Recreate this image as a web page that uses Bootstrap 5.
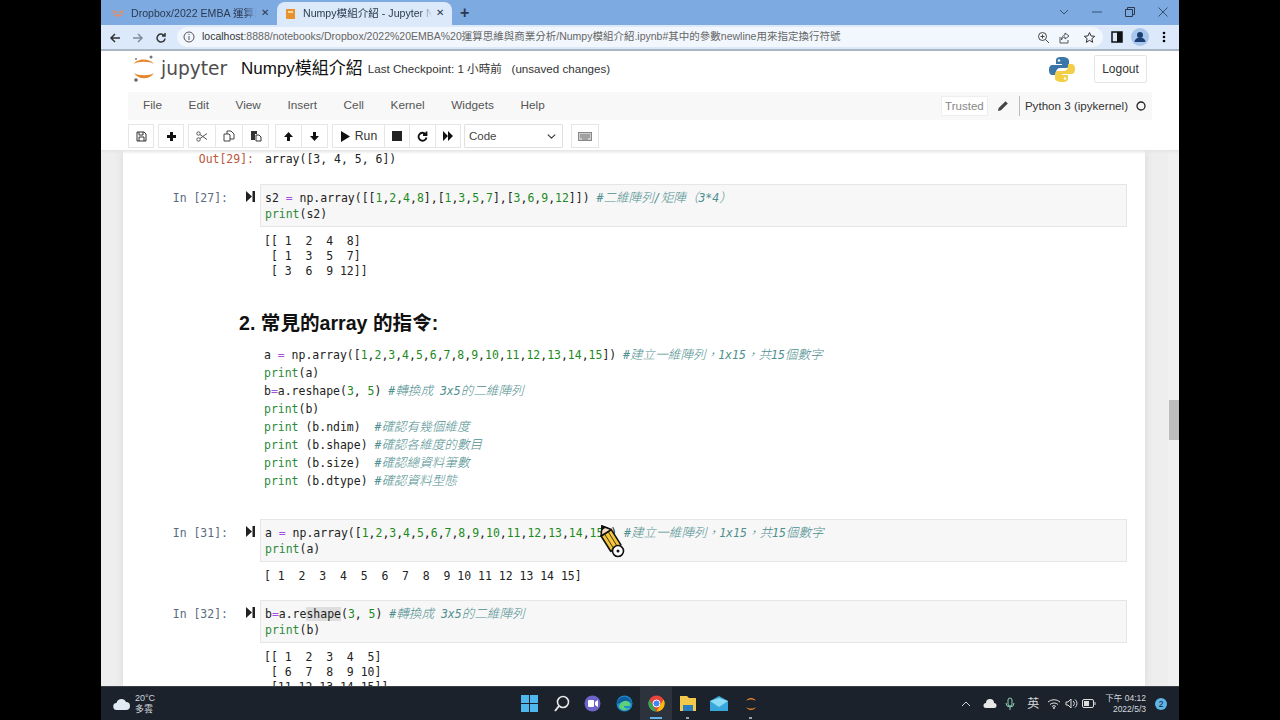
<!DOCTYPE html>
<html lang="zh-Hant">
<head>
  <meta charset="UTF-8">
  <title>Numpy模組介紹 - Jupyter Notebook</title>
  <link href="https://cdn.jsdelivr.net/npm/bootstrap@5.3.3/dist/css/bootstrap.min.css" rel="stylesheet">
  <style>
    html, body { height: 100%; margin: 0; overflow: hidden; background: #000; }
    body { font-family: "Liberation Sans", "Noto Sans CJK TC", sans-serif; color: #222; }
    .screen { width: 1078px; height: 720px; margin-left: 101px; background: #fff; position: relative; overflow: hidden; }

    /* browser chrome */
    .tabstrip { height: 25px; background: #7eaae2; color: #2b3a4f; font-size: 10.6px; }
    .tab-item { width: 176px; height: 23px; padding: 0 8px 0 11px; }
    .tab-on { width: 175px; background: #dbe9fb; border-radius: 8px 8px 0 0; height: 23px; padding: 0 8px 0 8px; }
    .tab-text { white-space: nowrap; overflow: hidden; flex: 1; margin-left: 3px; -webkit-mask-image: linear-gradient(90deg, #000 90%, transparent); mask-image: linear-gradient(90deg, #000 90%, transparent); }
    .tab-x { font-size: 9.5px; }
    .win-ctl { width: 132px; }
    .win-ctl span { width: 33px; text-align: center; line-height: 12px; }
    .addrbar { height: 26px; background: #dbe9fb; border-bottom: 2px solid #a9b6c6; padding: 0 7px 0 2px; }
    .addr-field { width: 926px; height: 20px; background: #f2f7fd; border-radius: 10px; font-size: 10.5px; color: #666; padding: 0 7px 0 6px; margin-left: 5px; }
    .addr-field b { font-weight: 400; color: #333; }
    .info-ic { margin-right: 7px; }
    .nav-ic { width: 23px; text-align: center; }
    .dots-ic { margin-left: 13px; }

    /* jupyter header */
    .jp-head { height: 40px; padding: 0 32px 4px 31px; }
    .jp-word { font-family: "DejaVu Sans", sans-serif; font-size: 18.6px; color: #4e4e4e; margin-left: 5px; width: 65px; }
    .jp-name { font-size: 17px; color: #111; margin: 0 5px 0 15px; }
    .jp-ck { font-size: 11.6px; color: #333; white-space: pre; }
    .jp-logout { font-size: 12px; height: 28px; width: 53px; border: 1px solid #e4e4e4; background: #fff; color: #333; margin-left: 19px; padding: 0; border-radius: 2px; }
    .jp-menu { height: 28px; margin: 1px 27px 0 27px; background: #f8f8f8; font-size: 11.8px; color: #555; padding: 0 6px 0 15px; column-gap: 26.6px; }
    .jp-right { column-gap: 0; }
    .jp-trust { font-size: 11.5px; color: #888; background: #fff; border: 1px solid #eee; height: 20px; width: 47px; line-height: 18px; text-align: center; }
    .pencil-ic { margin-left: 9px; }
    .jp-kernel { border-left: 1px solid #bbb; height: 20px; line-height: 20px; padding-left: 5px; margin-left: 10px; color: #333; font-size: 11.6px; }
    .jp-tools { height: 30px; margin: 0 27px; padding: 4px 0 0 1px; gap: 5px; }
    .tool-group { height: 24px; }
    .tool-up { margin-left: 2px; }
    .tool-btn { height: 24px; width: 26px; border: 1px solid #e6e6e6; background: #fff; margin-left: -1px; padding: 0; color: #222; font-size: 12.2px; display: flex; align-items: center; justify-content: center; border-radius: 0; }
    .tool-w27 { width: 27px; }
    .tool-w28 { width: 28px; }
    .tool-run { width: 53px; gap: 5px; color: #333; }
    .tool-code { width: 99px; height: 24px; font-size: 11.5px; color: #444; border: 1px solid #e0e0e0; border-radius: 1px; padding: 2px 4px 0; margin-left: -2px; background-position: right 5px center; background-size: 11px 9px; }
    .tool-kbd { margin-left: 4px; }

    /* notebook */
    .nb-area { height: 536px; background: #eee; overflow: hidden; position: relative; }
    .nb-area::before { content: ""; position: absolute; left: 0; right: 0; top: 0; height: 4px; background: linear-gradient(#e4e4e4, transparent); z-index: 2; }
    .nb-sheet { margin: 0 34px 0 22px; padding-top: 1px; background: #fff; box-shadow: 0 0 8px #d8d8d8; height: 100%; }
    .code { font-family: "DejaVu Sans Mono", "Noto Sans CJK TC", monospace; font-size: 11.48px; white-space: pre; color: #222; margin: 0; }
    .cmt { font-style: italic; color: #4f8f8f; }
    .cjk { font-family: "Noto Sans CJK TC", sans-serif; font-size: 12.6px; font-weight: 300; line-height: 1; }
    .kw { color: #2c8a3c; }
    .num { color: #1c8a1c; }
    .op { color: #a44fe0; }
    .cell-row { display: flex; }
    .cell-lab { width: 73px; text-align: right; color: #5a6a80; line-height: 16px; flex: none; margin-left: 32px; padding-top: 6px; }
    .cell-lab.out-lab { color: #b8563a; width: 99px; padding-top: 0; }
    .out-val { margin-left: 11px; line-height: 16px; }
    .runmark { width: 32px; flex: none; padding-left: 18px; padding-top: 7px; line-height: 0; }
    .cell-in { width: 867px; height: 43px; background: #f7f7f7; border: 1px solid #e6e6e6; padding: 5px 4px; line-height: 16px; flex: none; }
    .cell-out { margin: 7px 0 0 141px; line-height: 15px; }
    .md-h { font-size: 19.6px; font-weight: 700; color: #111; margin: 33px 0 0 116px; line-height: 22px; }
    .md-code { margin: 12px 0 0 141px; line-height: 18px; }
    .gap-a { margin-top: 17px; }
    .gap-b { margin-top: 29px; }
    .gap-c { margin-top: 16px; }
    .sel-word { background: #dedede; }
    .scroll-track { position: absolute; right: 0; top: 0; bottom: 0; width: 11px; background: #f1f1f1; }
    .scroll-thumb { position: absolute; left: 1px; right: 0; top: 250px; height: 40px; background: #bdbdbd; }
    .pen-cursor { position: absolute; left: 499px; top: 375px; z-index: 3; }

    /* windows taskbar */
    .taskbar { height: 34px; background: #1b222c; color: #d5d8dc; border-top: 1px solid #3a3f46; position: relative; padding-left: 12px; }
    .wx-text { line-height: 11px; margin-left: 5px; font-size: 9px; }
    .dock { position: absolute; left: 413px; top: 0; height: 33px; }
    .dock-it { width: 31.6px; height: 33px; display: flex; align-items: center; justify-content: center; position: relative; }
    .dock-it.on-app { background: #2c333d; }
    .dock-it.on-app::after { content: ""; position: absolute; bottom: 1px; left: 10px; width: 12px; height: 2px; background: #5fb4e8; }
    .dock-it.open-app::after { content: ""; position: absolute; bottom: 1px; left: 14px; width: 3px; height: 2px; background: #9aa0a6; }
    .tray { position: absolute; right: 12px; top: 0; height: 33px; }
    .tray-ime { font-size: 12px; }
    .tray-clock { text-align: right; line-height: 11px; font-size: 8.5px; margin: 0 9px 0 9px; }
    .tray-badge { width: 12px; height: 12px; border-radius: 50%; background: #5fb4e8; color: #10202e; font-size: 8.5px; text-align: center; line-height: 12px; }
  </style>
</head>
<body>
<div class="screen">
  <!-- tabs -->
  <div class="tabstrip d-flex align-items-end">
    <div class="tab-item d-flex align-items-center gap-1">
      <svg width="12" height="12" viewBox="0 0 12 12"><path d="M1 2l5 2-5 2zM11 2L6 4l5 2zM1 7l5 2 5-2-5-1z" fill="#e09070"/></svg>
      <span class="tab-text">Dropbox/2022 EMBA 運算思維與</span>
      <span class="tab-x">✕</span>
    </div>
    <div class="tab-on d-flex align-items-center gap-1">
      <svg width="11" height="12" viewBox="0 0 11 12"><path d="M1 1h9v10H2a1 1 0 0 1-1-1z" fill="#e8912d"/><path d="M3 3h5v2H3z" fill="#f9d7a5"/></svg>
      <span class="tab-text">Numpy模組介紹 - Jupyter Notebook</span>
      <span class="tab-x">✕</span>
    </div>
    <div class="ms-2 mb-1 fs-6 fw-bold lh-1">+</div>
    <div class="win-ctl d-flex ms-auto mb-2">
      <span><svg width="10" height="6" viewBox="0 0 10 6"><path d="M1 1l4 4 4-4" fill="none" stroke="#34506f"/></svg></span>
      <span><svg width="10" height="2" viewBox="0 0 10 2"><path d="M0 1h10" stroke="#34506f"/></svg></span>
      <span><svg width="10" height="10" viewBox="0 0 10 10"><path d="M.5 2.500h7v7h-7zM2.500 2.500v-2h7v7h-2" fill="none" stroke="#2b3a4f"/></svg></span>
      <span><svg width="10" height="10" viewBox="0 0 10 10"><path d="M.5.5l9 9M9.500.5l-9 9" stroke="#34506f"/></svg></span>
    </div>
  </div>
  <div class="addrbar d-flex align-items-center">
    <span class="nav-ic"><svg width="12" height="12" viewBox="0 0 12 12"><path d="M11 6H2M6 2L2 6l4 4" fill="none" stroke="#333" stroke-width="1.5"/></svg></span>
    <span class="nav-ic"><svg width="12" height="12" viewBox="0 0 12 12"><path d="M1 6h9M6 2l4 4-4 4" fill="none" stroke="#7d8b9c" stroke-width="1.5"/></svg></span>
    <span class="nav-ic"><svg width="12" height="12" viewBox="0 0 12 12"><path d="M10 6.500A4 4 0 1 1 9 3.400M10 1v3H7" fill="none" stroke="#333" stroke-width="1.5"/></svg></span>
    <div class="addr-field d-flex align-items-center">
      <svg class="info-ic" width="12" height="12" viewBox="0 0 12 12"><circle cx="6" cy="6" r="5" fill="none" stroke="#555"/><path d="M6 5v4M6 3v1" stroke="#555"/></svg>
      <span class="flex-grow-1"><b>localhost</b>:8888/notebooks/Dropbox/2022%20EMBA%20運算思維與商業分析/Numpy模組介紹.ipynb#其中的參數newline用來指定換行符號</span>
      <svg class="me-1" width="13" height="13" viewBox="0 0 13 13"><circle cx="5.500" cy="5.500" r="4" fill="none" stroke="#444"/><path d="M8.500 8.500l3.500 3.500M3.500 5.500h4M5.500 3.500v4" stroke="#444"/></svg>
      <svg class="mx-1" width="13" height="13" viewBox="0 0 13 13"><path d="M2 6v6h8V9M7 2l4 3-4 3V6C5 6 4 7 3.500 9 3.500 6 5 4 7 4z" fill="none" stroke="#555"/></svg>
      <svg class="ms-2" width="13" height="13" viewBox="0 0 13 13"><path d="M6.500 1.500l1.500 3.400 3.700.4-2.800 2.400.8 3.600-3.200-1.900-3.200 1.900.8-3.600L1.300 5.300l3.700-.4z" fill="none" stroke="#333"/></svg>
    </div>
    <svg class="ms-2" width="12" height="12" viewBox="0 0 12 12"><rect x="1" y="1" width="10" height="10" fill="none" stroke="#111" stroke-width="1.500"/><rect x="6" y="1" width="5" height="10" fill="#111"/></svg>
    <svg class="ms-2" width="18" height="18" viewBox="0 0 18 18"><circle cx="9" cy="9" r="9" fill="#a9c7ec"/><circle cx="9" cy="7" r="3" fill="#1c3f74"/><path d="M3.500 14a5.500 4.500 0 0 1 11 0z" fill="#1c3f74"/></svg>
    <svg class="dots-ic" width="4" height="12" viewBox="0 0 4 12"><circle cx="2" cy="2" r="1.300"/><circle cx="2" cy="6" r="1.300"/><circle cx="2" cy="10" r="1.300"/></svg>
  </div>

  <!-- jupyter header -->
  <div class="jp-head d-flex align-items-center">
    <svg width="24" height="30" viewBox="0 0 24 30">
      <path d="M2 10C5 4 18 4 22 10 18 7 6 7 2 10zM2 19c4 7 16 7 20 0-4 3-16 3-20 0z" fill="#e8862e"/>
      <circle cx="19" cy="3" r="1.500" fill="#777"/><circle cx="4" cy="5" r="1" fill="#777"/><circle cx="4" cy="26" r="1.800" fill="#666"/>
    </svg>
    <span class="jp-word">jupyter</span>
    <span class="jp-name">Numpy模組介紹</span>
    <span class="jp-ck">Last Checkpoint: 1 小時前   (unsaved changes)</span>
    <svg class="ms-auto" width="26" height="27" viewBox="0 0 26 27">
      <path d="M13 1C7 1 7 3 7 5v3h6v1H4C1 9 0 11 0 14s1 5 4 5h3v-3c0-2 2-4 4-4h6c2 0 3-1 3-3V5c0-2-2-4-7-4z" fill="#3a76a8"/>
      <path d="M13 26c6 0 6-2 6-4v-3h-6v-1h9c3 0 4-2 4-5s-1-5-4-5h-3v3c0 2-2 4-4 4H9c-2 0-3 1-3 3v4c0 2 2 4 7 4z" fill="#f2cf47"/>
      <circle cx="10" cy="4.500" r="1.200" fill="#fff"/><circle cx="16" cy="22.500" r="1.200" fill="#fff"/>
    </svg>
    <button class="jp-logout" type="button">Logout</button>
  </div>
  <div class="jp-menu d-flex align-items-center">
    <span>File</span>
    <span>Edit</span>
    <span>View</span>
    <span>Insert</span>
    <span>Cell</span>
    <span>Kernel</span>
    <span>Widgets</span>
    <span>Help</span>
    <div class="jp-right d-flex align-items-center ms-auto">
      <span class="jp-trust">Trusted</span>
      <svg class="pencil-ic" width="12" height="12" viewBox="0 0 12 12"><path d="M1 11l.7-3L8.500 1.200l2.300 2.300L4 10.300z" fill="#444"/></svg>
      <span class="jp-kernel">Python 3 (ipykernel)</span>
      <svg class="ms-2" width="10" height="10" viewBox="0 0 10 10"><circle cx="5" cy="5" r="4" fill="none" stroke="#222" stroke-width="1.300"/></svg>
    </div>
  </div>
  <div class="jp-tools d-flex">
    <div class="tool-group d-flex"><button class="tool-btn" type="button"><svg width="11" height="11" viewBox="0 0 11 11"><path d="M1 1h7l2 2v7H1z M3 1v3h4V1M3 10V6h5v4" fill="none" stroke="#333"/></svg></button></div>
    <div class="tool-group d-flex"><button class="tool-btn" type="button"><svg width="11" height="11" viewBox="0 0 11 11"><path d="M4 1h3v3h3v3H7v3H4V7H1V4h3z" fill="#111"/></svg></button></div>
    <div class="tool-group d-flex">
      <button class="tool-btn tool-w28" type="button"><svg width="12" height="11" viewBox="0 0 12 11"><circle cx="2.500" cy="2.500" r="1.700" fill="none" stroke="#555"/><circle cx="2.500" cy="8.500" r="1.700" fill="none" stroke="#555"/><path d="M4 3.500l7 5M4 7.500l7-5" stroke="#555"/></svg></button>
      <button class="tool-btn tool-w28" type="button"><svg width="12" height="12" viewBox="0 0 12 12"><path d="M4 4V1h4l3 3v5H7M1 4h5l1 1v6H1z" fill="none" stroke="#444"/></svg></button>
      <button class="tool-btn tool-w27" type="button"><svg width="12" height="12" viewBox="0 0 12 12"><path d="M1 1h6v3H5v6H1z" fill="#333"/><path d="M6 5h3l2 2v4H6z" fill="none" stroke="#333"/></svg></button>
    </div>
    <div class="tool-group tool-up d-flex">
      <button class="tool-btn tool-w27" type="button"><svg width="11" height="11" viewBox="0 0 11 11"><path d="M5.500 1L10 6H7v4H4V6H1z" fill="#111"/></svg></button>
      <button class="tool-btn tool-w27" type="button"><svg width="11" height="11" viewBox="0 0 11 11"><path d="M5.500 10L10 5H7V1H4v4H1z" fill="#111"/></svg></button>
    </div>
    <div class="tool-group d-flex">
      <button class="tool-btn tool-run" type="button"><svg width="10" height="11" viewBox="0 0 10 11"><path d="M1 0l9 5.500L1 11z" fill="#111"/></svg>Run</button>
      <button class="tool-btn" type="button"><svg width="10" height="10" viewBox="0 0 10 10"><rect width="10" height="10" fill="#222"/></svg></button>
      <button class="tool-btn tool-w27" type="button"><svg width="11" height="11" viewBox="0 0 11 11"><path d="M9.500 6.500A4 4 0 1 1 8.500 3M9.500.5V4H6" fill="none" stroke="#111" stroke-width="1.800"/></svg></button>
      <button class="tool-btn" type="button"><svg width="11" height="10" viewBox="0 0 11 10"><path d="M0 0l5 5-5 5zM5 0l5 5-5 5z" fill="#111"/></svg></button>
    </div>
    <select class="form-select tool-code"><option>Code</option></select>
    <div class="tool-group tool-kbd d-flex"><button class="tool-btn tool-w28" type="button"><svg width="14" height="9" viewBox="0 0 14 9"><rect x=".5" y=".5" width="13" height="8" fill="#ccc" stroke="#888"/><path d="M2 3h10M2 5h10M4 7h6" stroke="#777"/></svg></button></div>
  </div>

  <!-- notebook -->
  <div class="nb-area">
    <div class="nb-sheet">
      <div class="cell-row">
        <div class="code cell-lab out-lab">Out[29]:</div>
        <div class="code out-val">array([3, 4, 5, 6])</div>
      </div>

      <div class="cell-row gap-a">
        <div class="code cell-lab">In [27]:</div>
        <div class="runmark"><svg width="9" height="11" viewBox="0 0 9 11"><path d="M0 0l6 5.500L0 11zM6.500 0H9v11H6.500z" fill="#222"/></svg></div>
        <div class="cell-in code">s2 <span class="op">=</span> np.array([[<span class="num">1</span>,<span class="num">2</span>,<span class="num">4</span>,<span class="num">8</span>],[<span class="num">1</span>,<span class="num">3</span>,<span class="num">5</span>,<span class="num">7</span>],[<span class="num">3</span>,<span class="num">6</span>,<span class="num">9</span>,<span class="num">12</span>]]) <span class="cmt">#<span class="cjk">二維陣列</span>/<span class="cjk">矩陣（</span>3*4<span class="cjk">）</span></span>
<span class="kw">print</span>(s2)</div>
      </div>
      <pre class="code cell-out">[[ 1  2  4  8]
 [ 1  3  5  7]
 [ 3  6  9 12]]</pre>

      <h2 class="md-h">2. 常見的array 的指令:</h2>
      <pre class="code md-code">a <span class="op">=</span> np.array([<span class="num">1</span>,<span class="num">2</span>,<span class="num">3</span>,<span class="num">4</span>,<span class="num">5</span>,<span class="num">6</span>,<span class="num">7</span>,<span class="num">8</span>,<span class="num">9</span>,<span class="num">10</span>,<span class="num">11</span>,<span class="num">12</span>,<span class="num">13</span>,<span class="num">14</span>,<span class="num">15</span>]) <span class="cmt">#<span class="cjk">建立一維陣列，</span>1x15<span class="cjk">，共</span>15<span class="cjk">個數字</span></span>
<span class="kw">print</span>(a)
b<span class="op">=</span>a.reshape(<span class="num">3</span>, <span class="num">5</span>) <span class="cmt">#<span class="cjk">轉換成</span> 3x5<span class="cjk">的二維陣列</span></span>
<span class="kw">print</span>(b)
<span class="kw">print</span> (b.ndim)  <span class="cmt">#<span class="cjk">確認有幾個維度</span></span>
<span class="kw">print</span> (b.shape) <span class="cmt">#<span class="cjk">確認各維度的數目</span></span>
<span class="kw">print</span> (b.size)  <span class="cmt">#<span class="cjk">確認總資料筆數</span></span>
<span class="kw">print</span> (b.dtype) <span class="cmt">#<span class="cjk">確認資料型態</span></span></pre>

      <div class="cell-row gap-b">
        <div class="code cell-lab">In [31]:</div>
        <div class="runmark"><svg width="9" height="11" viewBox="0 0 9 11"><path d="M0 0l6 5.500L0 11zM6.500 0H9v11H6.500z" fill="#222"/></svg></div>
        <div class="cell-in code">a <span class="op">=</span> np.array([<span class="num">1</span>,<span class="num">2</span>,<span class="num">3</span>,<span class="num">4</span>,<span class="num">5</span>,<span class="num">6</span>,<span class="num">7</span>,<span class="num">8</span>,<span class="num">9</span>,<span class="num">10</span>,<span class="num">11</span>,<span class="num">12</span>,<span class="num">13</span>,<span class="num">14</span>,<span class="num">15</span>]) <span class="cmt">#<span class="cjk">建立一維陣列，</span>1x15<span class="cjk">，共</span>15<span class="cjk">個數字</span></span>
<span class="kw">print</span>(a)</div>
      </div>
      <pre class="code cell-out">[ 1  2  3  4  5  6  7  8  9 10 11 12 13 14 15]</pre>

      <div class="cell-row gap-c">
        <div class="code cell-lab">In [32]:</div>
        <div class="runmark"><svg width="9" height="11" viewBox="0 0 9 11"><path d="M0 0l6 5.500L0 11zM6.500 0H9v11H6.500z" fill="#222"/></svg></div>
        <div class="cell-in code">b<span class="op">=</span>a.re<span class="sel-word">shape</span>(<span class="num">3</span>, <span class="num">5</span>) <span class="cmt">#<span class="cjk">轉換成</span> 3x5<span class="cjk">的二維陣列</span></span>
<span class="kw">print</span>(b)</div>
      </div>
      <pre class="code cell-out">[[ 1  2  3  4  5]
 [ 6  7  8  9 10]
 [11 12 13 14 15]]</pre>
    </div>
    <div class="scroll-track"><div class="scroll-thumb"></div></div>
    <svg class="pen-cursor" width="26" height="33" viewBox="0 0 26 33">
      <g stroke="#111" stroke-width="1.600" stroke-linejoin="round">
        <path d="M11.300 4.600L20.900 19.900 10.700 26.300 1.100 11z" fill="#f3c53a"/>
        <path d="M2 1L11.300 4.600 1.100 11z" fill="#f8dcc6"/>
        <path d="M8 6.500l9.500 15.300M4.500 8.800l9.500 15.300" fill="none" stroke-width=".8"/>
        <circle cx="18" cy="26" r="5.500" fill="#fff"/>
      </g>
      <path d="M1 0l5.500 2L1 6z" fill="#111"/>
      <circle cx="18" cy="26" r="1.500" fill="#111"/>
    </svg>
  </div>

  <!-- taskbar -->
  <div class="taskbar d-flex align-items-center">
    <svg width="17" height="14" viewBox="0 0 17 14"><path d="M4 13a3.500 3.500 0 0 1-.5-7 5 5 0 0 1 9.500-1 4 4 0 0 1 0 8z" fill="#dfeaf4"/></svg>
    <div class="wx-text">20°C<br>多雲</div>
    <div class="dock d-flex">
      <div class="dock-it"><svg width="17" height="17" viewBox="0 0 17 17"><path d="M0 0h8v8H0zM9 0h8v8H9zM0 9h8v8H0zM9 9h8v8H9z" fill="#4fb6ee"/></svg></div>
      <div class="dock-it"><svg width="17" height="18" viewBox="0 0 17 18"><circle cx="10" cy="7" r="5.500" fill="none" stroke="#e8e8e8" stroke-width="1.600"/><path d="M6 11l-4 5" stroke="#e8e8e8" stroke-width="2"/></svg></div>
      <div class="dock-it"><svg width="17" height="17" viewBox="0 0 17 17"><circle cx="8.500" cy="8.500" r="8" fill="#6d63c9"/><rect x="4" y="5" width="6" height="7" rx="1" fill="#fff"/><path d="M11 7l3-2v7l-3-2z" fill="#fff"/></svg></div>
      <div class="dock-it"><svg width="17" height="17" viewBox="0 0 17 17"><circle cx="8.500" cy="8.500" r="8" fill="#1a8ccf"/><path d="M3 12c1-5 5-7 8-6 3 1 4 3 3 5H8c0 2 2 3 6 2-3 3-9 3-11-1z" fill="#5fd07a"/><path d="M1 9c0-5 5-8 9-7 3 1 6 4 6 7-2-3-5-4-8-3-4 1-5 3-7 3z" fill="#0f5d9c"/></svg></div>
      <div class="dock-it on-app"><svg width="17" height="17" viewBox="0 0 17 17"><circle cx="8.500" cy="8.500" r="8" fill="#e8453c"/><path d="M8.500 16.500A8 8 0 0 1 1.500 4.500l4 7 3 5z" fill="#34a853"/><path d="M15.500 4.500a8 8 0 0 1-7 12l4-7z" fill="#fbbc05"/><circle cx="8.500" cy="8.500" r="3.500" fill="#4285f4" stroke="#fff"/></svg></div>
      <div class="dock-it open-app"><svg width="18" height="17" viewBox="0 0 18 17"><path d="M1 1h7l2 2h7v13H1z" fill="#f3c94c"/><rect x="4" y="10" width="10" height="6" fill="#2a7fc1"/></svg></div>
      <div class="dock-it"><svg width="18" height="15" viewBox="0 0 18 15"><path d="M0 5l9-5 9 5v10H0z" fill="#38a7dc"/><path d="M0 5l9 6 9-6-9-3z" fill="#8ddcf5"/></svg></div>
      <div class="dock-it open-app"><svg width="12" height="18" viewBox="0 0 12 18"><path d="M1 6c2-4 8-4 10 0-3-2-7-2-10 0zM1 12c3 2 7 2 10 0-2 4-8 4-10 0z" fill="#e8862e"/></svg></div>
    </div>
    <div class="tray d-flex align-items-center">
      <svg width="10" height="6" viewBox="0 0 10 6" class="me-2"><path d="M1 5l4-4 4 4" fill="none" stroke="#cfd2d6"/></svg>
      <svg class="ms-1" width="14" height="9" viewBox="0 0 14 9"><path d="M3 9a2.500 2.500 0 0 1 0-5 4 4 0 0 1 8 0 2.500 2.500 0 0 1 0 5z" fill="#e8e8e8"/></svg>
      <svg class="ms-2" width="10" height="14" viewBox="0 0 10 14"><rect x="3" y="1" width="4" height="8" rx="2" fill="none" stroke="#8fd0b8"/><path d="M1 6a4 4 0 0 0 8 0M5 10v3" fill="none" stroke="#8fd0b8"/></svg>
      <span class="tray-ime ms-2 ps-1">英</span>
      <svg class="ms-2" width="14" height="11" viewBox="0 0 14 11"><path d="M1 4a9 9 0 0 1 12 0M3 6.500a6 6 0 0 1 8 0M5 8.500a3 3 0 0 1 4 0" fill="none" stroke="#dedede"/><circle cx="7" cy="10" r="1" fill="#dedede"/></svg>
      <svg class="ms-1" width="13" height="11" viewBox="0 0 13 11"><path d="M1 4h2l3-3v9L3 7H1z" fill="none" stroke="#dedede"/><path d="M8 3a3 3 0 0 1 0 5M10 1.500a5 5 0 0 1 0 8" fill="none" stroke="#dedede"/></svg>
      <svg class="ms-1" width="14" height="9" viewBox="0 0 14 9"><rect x=".5" y=".5" width="11" height="8" rx="1.500" fill="none" stroke="#dedede"/><rect x="2" y="2" width="5" height="5" fill="#dedede"/><path d="M13 3v3" stroke="#dedede"/></svg>
      <div class="tray-clock">下午 04:12<br>2022/5/3</div>
      <div class="tray-badge">2</div>
    </div>
  </div>
</div>
<script src="https://cdn.jsdelivr.net/npm/bootstrap@5.3.3/dist/js/bootstrap.bundle.min.js"></script>
</body>
</html>
